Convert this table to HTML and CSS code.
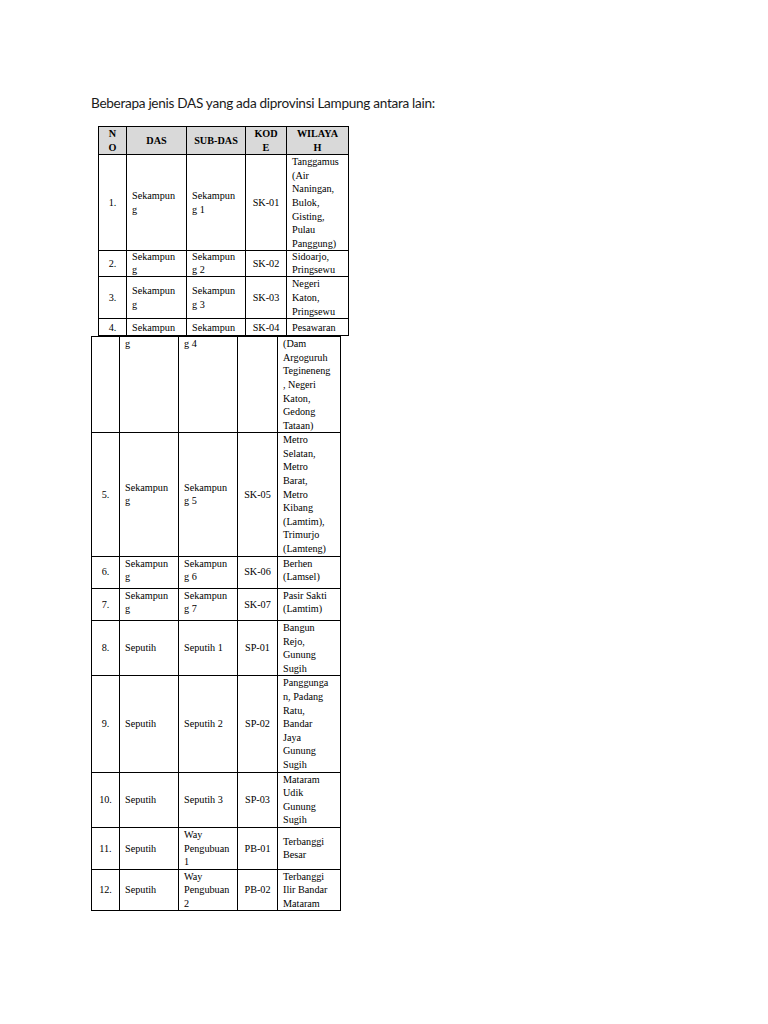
FILE: index.html
```html
<!DOCTYPE html>
<html lang="id">
<head>
<meta charset="utf-8">
<title>DAS Lampung</title>
<link rel="stylesheet" href="styles.css">
</head>
<body>
<div class="page">
  <p class="title">Beberapa jenis DAS yang ada diprovinsi Lampung antara lain:</p>

  <table class="tbl tbl-top">
    <colgroup>
      <col class="c-no"><col class="c-das"><col class="c-sub"><col class="c-kode"><col class="c-wil">
    </colgroup>
    <tr class="head">
      <th>N<br>O</th><th>DAS</th><th>SUB-DAS</th><th>KOD<br>E</th><th>WILAYA<br>H</th>
    </tr>
    <tr>
      <td class="no">1.</td><td>Sekampun<br>g</td><td>Sekampun<br>g 1</td><td class="kode">SK-01</td>
      <td>Tanggamus<br>(Air<br>Naningan,<br>Bulok,<br>Gisting,<br>Pulau<br>Panggung)</td>
    </tr>
    <tr class="tight">
      <td class="no">2.</td><td>Sekampun<br>g</td><td>Sekampun<br>g 2</td><td class="kode">SK-02</td>
      <td>Sidoarjo,<br>Pringsewu</td>
    </tr>
    <tr>
      <td class="no">3.</td><td>Sekampun<br>g</td><td>Sekampun<br>g 3</td><td class="kode">SK-03</td>
      <td>Negeri<br>Katon,<br>Pringsewu</td>
    </tr>
    <tr class="split">
      <td class="no">4.</td><td>Sekampun</td><td>Sekampun</td><td class="kode">SK-04</td>
      <td>Pesawaran</td>
    </tr>
  </table>

  <table class="tbl tbl-bottom">
    <colgroup>
      <col class="c-no"><col class="c-das2"><col class="c-sub"><col class="c-kode2"><col class="c-wil2">
    </colgroup>
    <tr class="cont">
      <td class="no"></td><td>g</td><td>g 4</td><td class="kode"></td>
      <td>(Dam<br>Argoguruh<br>Tegineneng<br>, Negeri<br>Katon,<br>Gedong<br>Tataan)</td>
    </tr>
    <tr>
      <td class="no">5.</td><td>Sekampun<br>g</td><td>Sekampun<br>g 5</td><td class="kode">SK-05</td>
      <td>Metro<br>Selatan,<br>Metro<br>Barat,<br>Metro<br>Kibang<br>(Lamtim),<br>Trimurjo<br>(Lamteng)</td>
    </tr>
    <tr class="tall">
      <td class="no">6.</td><td>Sekampun<br>g</td><td>Sekampun<br>g 6</td><td class="kode">SK-06</td>
      <td>Berhen<br>(Lamsel)</td>
    </tr>
    <tr class="tall">
      <td class="no">7.</td><td>Sekampun<br>g</td><td>Sekampun<br>g 7</td><td class="kode">SK-07</td>
      <td>Pasir Sakti<br>(Lamtim)</td>
    </tr>
    <tr>
      <td class="no">8.</td><td>Seputih</td><td>Seputih 1</td><td class="kode">SP-01</td>
      <td>Bangun<br>Rejo,<br>Gunung<br>Sugih</td>
    </tr>
    <tr>
      <td class="no">9.</td><td>Seputih</td><td>Seputih 2</td><td class="kode">SP-02</td>
      <td>Panggunga<br>n, Padang<br>Ratu,<br>Bandar<br>Jaya<br>Gunung<br>Sugih</td>
    </tr>
    <tr>
      <td class="no">10.</td><td>Seputih</td><td>Seputih 3</td><td class="kode">SP-03</td>
      <td>Mataram<br>Udik<br>Gunung<br>Sugih</td>
    </tr>
    <tr>
      <td class="no">11.</td><td>Seputih</td><td>Way<br>Pengubuan<br>1</td><td class="kode">PB-01</td>
      <td>Terbanggi<br>Besar</td>
    </tr>
    <tr>
      <td class="no">12.</td><td>Seputih</td><td>Way<br>Pengubuan<br>2</td><td class="kode">PB-02</td>
      <td>Terbanggi<br>Ilir Bandar<br>Mataram</td>
    </tr>
  </table>
</div>
</body>
</html>
```

FILE: styles.css
```css
html, body {
  margin: 0;
  padding: 0;
  background: #ffffff;
}

.page {
  padding: 94px 0 0 91px;
}

.title {
  margin: 0 0 14px 0;
  font-family: Lato, "Open Sans", sans-serif;
  font-size: 13.6px;
  line-height: 18px;
  color: #1b1b1b;
  letter-spacing: -0.3px;
}

.tbl {
  border-collapse: collapse;
  table-layout: fixed;
  font-family: "Liberation Serif", "Times New Roman", serif;
  font-size: 10.2px;
  line-height: 13.6px;
  color: #000;
}

.tbl-top {
  margin-left: 7px;
  width: 251px;
}

.tbl-bottom {
  width: 250px;
}

.c-no { width: 28px; }
.c-das { width: 60px; }
.c-das2 { width: 59px; }
.c-sub { width: 59px; }
.c-kode { width: 41px; }
.c-kode2 { width: 40px; }
.c-wil { width: 62px; }
.c-wil2 { width: 63px; }

.tbl th,
.tbl td {
  border: 1px solid #000;
  padding: 0 4px 0 5px;
  vertical-align: middle;
  text-align: left;
  white-space: nowrap;
  overflow: hidden;
}

.tbl th {
  background: #d9d9d9;
  font-weight: bold;
  text-align: center;
  padding: 0 2px;
}

.tbl td.no,
.tbl td.kode {
  text-align: center;
  padding: 0 2px;
}

.tight td {
  line-height: 12.5px;
}

.split td {
  height: 16px;
  line-height: 13px;
}

.cont td {
  vertical-align: top;
}

.tall td {
  padding-bottom: 4px;
}
```
